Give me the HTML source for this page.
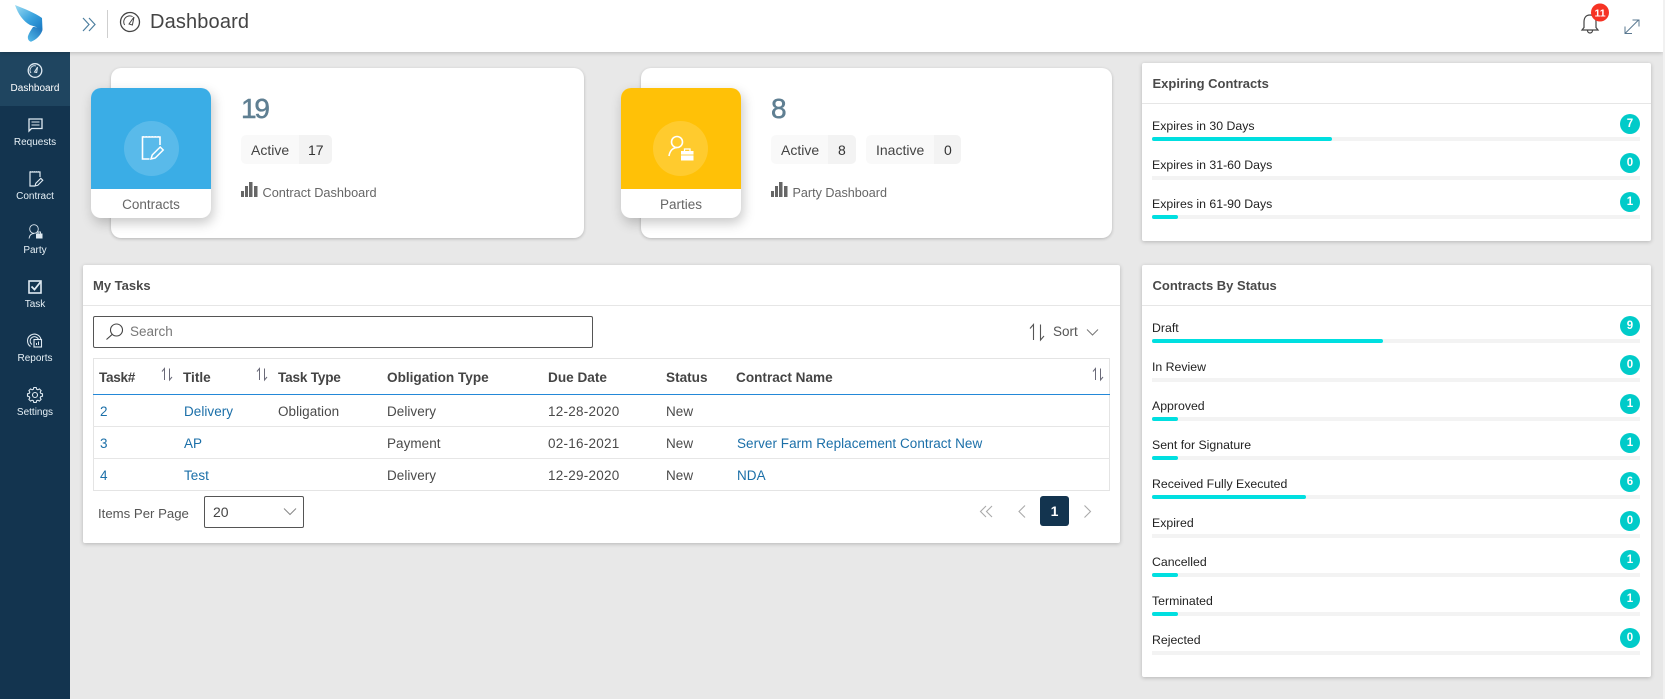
<!DOCTYPE html>
<html lang="en"><head><meta charset="utf-8"><title>Dashboard</title>
<style>
*{box-sizing:border-box}
html,body{margin:0;padding:0;width:1665px;height:699px;overflow:hidden;background:#e8e8e8;font-family:"Liberation Sans",Arial,sans-serif;color:#444}
.a{position:absolute}
.t{position:absolute;white-space:nowrap;line-height:20px;height:20px}
.top{left:0;top:0;width:1663px;height:52px;background:#fff;box-shadow:0 1px 4px rgba(0,0,0,.2)}
.strip{left:1663px;top:0;width:2px;height:699px;background:#f1f1f1}
.side{left:0;top:52px;width:70px;height:647px;background:#13344f}
.act{left:0;top:52px;width:70px;height:54px;background:#1f4560}
.sl{width:70px;left:0;text-align:center;font-size:10px;color:#e6f0f6}
.card{background:#fff;border-radius:10px;box-shadow:0 1px 3px rgba(0,0,0,.22)}
.sq{width:120px;height:130px;top:88px;background:#fff;border-radius:10px;box-shadow:2px 5px 12px rgba(0,0,0,.22);overflow:hidden}
.sq div{height:101px}
.circ{width:55px;height:55px;border-radius:50%;background:rgba(255,255,255,.16);top:121px}
.sqt{font-size:13.5px;color:#666;top:195px;width:120px;text-align:center}
.num{font-size:28px;color:#5f7f92;top:99px;-webkit-text-stroke:.5px #5f7f92;line-height:20px}
.chip{top:135px;height:29px;background:#f9f9f9;border-radius:5px;overflow:hidden}
.chip i{position:absolute;right:0;top:0;height:29px;background:#f3f3f3}
.cl{font-size:14px;top:140px;color:#444}
.cv{font-size:14px;top:140px;color:#333}
.lk{font-size:12.75px;color:#666;top:183px}
.panel{background:#fff;border-radius:2px;box-shadow:0 1px 4px rgba(0,0,0,.22)}
.hl{height:1px;background:#e6e6e6}
.ttl{font-size:13px;font-weight:bold;color:#4a4a4a}
.th{font-size:13.6px;font-weight:bold;color:#444;top:368px}
.td{font-size:13.5px;color:#4a4a4a;letter-spacing:.04px}
.l{color:#1b6fa8}
.r{position:absolute;left:1152px;width:488px;height:30px}
.r span{position:absolute;left:0;top:1px;font-size:12.3px;line-height:20px;color:#222;white-space:nowrap}
.r u{position:absolute;left:0;top:22px;width:488px;height:4px;background:#f3f3f3;display:block;text-decoration:none}
.r s{position:absolute;left:0;top:22px;height:4px;background:#00dfe0;border-radius:2px;display:block;text-decoration:none}
.r b{position:absolute;right:0;top:-1px;width:20px;height:20px;border-radius:50%;background:#00cbc9;color:#fff;font-size:11.5px;line-height:20px;text-align:center}
</style></head><body>

<div class="a side"></div><div class="a act"></div>
<div class="a top"></div>
<div class="a strip"></div>

<div class="t" style="left:150px;top:12px;font-size:20px;color:#444;letter-spacing:.15px">Dashboard</div>

<div class="t sl" style="top:79px;color:#fff">Dashboard</div>
<div class="t sl" style="top:133px">Requests</div>
<div class="t sl" style="top:187px">Contract</div>
<div class="t sl" style="top:241px">Party</div>
<div class="t sl" style="top:295px">Task</div>
<div class="t sl" style="top:349px">Reports</div>
<div class="t sl" style="top:403px">Settings</div>

<!-- Contracts card -->
<div class="a card" style="left:111px;top:68px;width:473px;height:170px"></div>
<div class="a sq" style="left:91px"><div style="background:#3aade6"></div></div>
<div class="a circ" style="left:124px"></div>
<div class="t sqt" style="left:91px">Contracts</div>
<div class="t num" style="left:241px;letter-spacing:-2.2px">19</div>
<div class="a chip" style="left:241px;width:91px"><i style="width:33px"></i></div>
<div class="t cl" style="left:251px">Active</div>
<div class="t cv" style="left:308px">17</div>
<div class="t lk" style="left:262.5px">Contract Dashboard</div>

<!-- Parties card -->
<div class="a card" style="left:641px;top:68px;width:471px;height:170px"></div>
<div class="a sq" style="left:621px"><div style="background:#ffc107"></div></div>
<div class="a circ" style="left:653px"></div>
<div class="t sqt" style="left:621px">Parties</div>
<div class="t num" style="left:771px">8</div>
<div class="a chip" style="left:771px;width:85px"><i style="width:28px"></i></div>
<div class="t cl" style="left:781px">Active</div>
<div class="t cv" style="left:838px">8</div>
<div class="a chip" style="left:866px;width:95px"><i style="width:27px"></i></div>
<div class="t cl" style="left:876px">Inactive</div>
<div class="t cv" style="left:944px">0</div>
<div class="t lk" style="left:792.5px;font-size:12.6px">Party Dashboard</div>

<!-- My tasks -->
<div class="a panel" style="left:83px;top:265px;width:1037px;height:278px"></div>
<div class="a hl" style="left:83px;top:305px;width:1037px"></div>
<div class="t ttl" style="left:93px;top:276px">My Tasks</div>
<div class="a" style="left:93px;top:316px;width:500px;height:32px;border:1px solid #555;border-radius:2px"></div>
<div class="t" style="left:130px;top:322px;font-size:13.5px;color:#777">Search</div>
<div class="t" style="left:1053px;top:322px;font-size:13.5px;color:#555">Sort</div>

<div class="a" style="left:93px;top:358px;width:1017px;height:133px;border:1px solid #e4e4e4;border-top-width:1px"></div>
<div class="a" style="left:93px;top:394px;width:1017px;height:1px;background:#2388d8"></div>
<div class="a hl" style="left:93px;top:426px;width:1017px"></div>
<div class="a hl" style="left:93px;top:458px;width:1017px"></div>

<div class="t th" style="left:99px;letter-spacing:-.3px">Task#</div>
<div class="t th" style="left:183px">Title</div>
<div class="t th" style="left:278px;letter-spacing:-.2px">Task Type</div>
<div class="t th" style="left:387px">Obligation Type</div>
<div class="t th" style="left:548px">Due Date</div>
<div class="t th" style="left:666px">Status</div>
<div class="t th" style="left:736px">Contract Name</div>

<div class="t td l" style="left:100px;top:402px">2</div>
<div class="t td l" style="left:184px;top:402px">Delivery</div>
<div class="t td" style="left:278px;top:402px">Obligation</div>
<div class="t td" style="left:387px;top:402px">Delivery</div>
<div class="t td" style="left:548px;top:402px;letter-spacing:.25px">12-28-2020</div>
<div class="t td" style="left:666px;top:402px">New</div>

<div class="t td l" style="left:100px;top:434px">3</div>
<div class="t td l" style="left:184px;top:434px">AP</div>
<div class="t td" style="left:387px;top:434px">Payment</div>
<div class="t td" style="left:548px;top:434px;letter-spacing:.25px">02-16-2021</div>
<div class="t td" style="left:666px;top:434px">New</div>
<div class="t td l" style="left:737px;top:434px">Server Farm Replacement Contract New</div>

<div class="t td l" style="left:100px;top:466px">4</div>
<div class="t td l" style="left:184px;top:466px">Test</div>
<div class="t td" style="left:387px;top:466px">Delivery</div>
<div class="t td" style="left:548px;top:466px;letter-spacing:.25px">12-29-2020</div>
<div class="t td" style="left:666px;top:466px">New</div>
<div class="t td l" style="left:737px;top:466px">NDA</div>

<div class="t" style="left:98px;top:504px;font-size:13.2px;color:#555">Items Per Page</div>
<div class="a" style="left:204px;top:496px;width:100px;height:32px;border:1px solid #555;border-radius:2px"></div>
<div class="t" style="left:213px;top:502px;font-size:14px;color:#444">20</div>
<div class="a" style="left:1040px;top:496px;width:29px;height:30px;background:#13344f;border-radius:3px"></div>
<div class="t" style="left:1040px;width:29px;text-align:center;top:501px;font-size:14px;font-weight:bold;color:#fff">1</div>

<!-- Expiring -->
<div class="a panel" style="left:1142px;top:63px;width:509px;height:178px"></div>
<div class="a hl" style="left:1142px;top:103px;width:509px"></div>
<div class="t ttl" style="left:1152.500px;top:74px">Expiring Contracts</div>
<div class="r" style="top:115px"><span>Expires in 30 Days</span><u></u><s style="width:180px"></s><b>7</b></div>
<div class="r" style="top:154px"><span>Expires in 31-60 Days</span><u></u><b>0</b></div>
<div class="r" style="top:193px"><span>Expires in 61-90 Days</span><u></u><s style="width:26px"></s><b>1</b></div>

<!-- By status -->
<div class="a panel" style="left:1142px;top:265px;width:509px;height:412px"></div>
<div class="a hl" style="left:1142px;top:305px;width:509px"></div>
<div class="t ttl" style="left:1152.500px;top:276px">Contracts By Status</div>
<div class="r" style="top:317px"><span>Draft</span><u></u><s style="width:231px"></s><b>9</b></div>
<div class="r" style="top:356px"><span>In Review</span><u></u><b>0</b></div>
<div class="r" style="top:395px"><span>Approved</span><u></u><s style="width:26px"></s><b>1</b></div>
<div class="r" style="top:434px"><span>Sent for Signature</span><u></u><s style="width:26px"></s><b>1</b></div>
<div class="r" style="top:473px"><span>Received Fully Executed</span><u></u><s style="width:154px"></s><b>6</b></div>
<div class="r" style="top:512px"><span>Expired</span><u></u><b>0</b></div>
<div class="r" style="top:551px"><span>Cancelled</span><u></u><s style="width:26px"></s><b>1</b></div>
<div class="r" style="top:590px"><span>Terminated</span><u></u><s style="width:26px"></s><b>1</b></div>
<div class="r" style="top:629px"><span>Rejected</span><u></u><b>0</b></div>

<!-- Icon overlay -->
<svg class="a" style="left:0;top:0" width="1665" height="699" viewBox="0 0 1665 699" fill="none">
<defs>
<linearGradient id="g1" x1="0" y1="0" x2="1" y2="1"><stop offset="0" stop-color="#9ddcf2"/><stop offset=".55" stop-color="#3aa3de"/><stop offset="1" stop-color="#1877c2"/></linearGradient>
<linearGradient id="g2" x1="1" y1="0" x2="0" y2="1"><stop offset="0" stop-color="#1a6fba"/><stop offset="1" stop-color="#57bdea"/></linearGradient>
</defs>
<!-- logo -->
<path d="M15 5 C25 9 35 13 42 18 L42.5 30 C37 27 33 26 30 25 C23 21 18 14 15 5Z" fill="url(#g1)"/>
<path d="M42.5 30 C41 35 36 40 31 41.7 C28 41 27.5 38 28 36 C29 33 31 30 33 27 C37 27 40 28 42.5 30Z" fill="url(#g2)"/>

<!-- top bar -->
<path d="M83 18l6 6.5-6 6.5M89 18l6 6.5-6 6.5" stroke="#4d7f9f" stroke-width="1.2"/>
<path d="M107.5 10v28" stroke="#cfcfcf" stroke-width="1"/>
<g stroke="#444">
<circle cx="130" cy="22" r="9.5" stroke-width="1.3"/>
<path d="M124.6 25a6 6 0 0 1 2-8.2 6 6 0 0 1 6-.2" stroke-width="1"/>
<path d="M129 24l5-7-1.6 8z" stroke-width="1"/>
</g>
<path d="M1590 15c-4.6 0-6 3.6-6 7v5.5l-2 2.500h16l-2-2.500V22c0-3.400-1.400-7-6-7z" stroke="#444" stroke-width="1.200"/>
<path d="M1587.500 30.500a2.500 2.500 0 0 0 5 0" stroke="#444" stroke-width="1.200"/>
<circle cx="1600" cy="12.500" r="9" fill="#f63324"/>
<text x="1600" y="16.500" font-family="Liberation Sans" font-size="10.500" font-weight="bold" fill="#fff" text-anchor="middle">11</text>
<path d="M1625.500 33l13-13M1632.500 20h6.500v6.500M1625 26.500v7h7" stroke="#5a7890" stroke-width="1"/>

<!-- sidebar icons -->
<g stroke="#dfeaf2" fill="none">
<circle cx="35" cy="70.500" r="6.800" stroke-width="1.300"/>
<path d="M31 73a4.500 4.500 0 0 1 5-7" stroke-width=".9"/>
<path d="M34.500 72l3-5-.8 5.500z" stroke-width="1"/>
<path d="M29 119h13v9.500h-10.500l-2.500 2.500z" stroke-width="1.300"/>
<path d="M31.500 122h8M31.500 125h8" stroke-width="1.100"/>
<path d="M40 177v-5H30v14h4.500" stroke-width="1.200"/>
<path d="M30 171.800h10" stroke-width="1" stroke-dasharray="1 1"/>
<path d="M35 186l.8-2.700 5-5 2 2-5 5z" stroke-width="1.100"/>
<circle cx="34" cy="229" r="4.300" stroke-width=".9"/>
<path d="M29 238.500c.6-3.500 2.500-5 5-5" stroke-width=".9"/>
<rect x="36" y="233.500" width="6.500" height="5" fill="#dfeaf2" stroke="none"/>
<path d="M38 233.500v-1.500h2.500v1.500" stroke-width=".9"/>
<rect x="29" y="281" width="12" height="12" stroke-width="1.600"/>
<path d="M31.500 286.500l3 3 6-7.500" stroke-width="1.800"/>
<path d="M30.500 346.500a6.800 6.800 0 1 1 10.500-7" stroke-width="1.100"/>
<path d="M32 344.500a4.300 4.300 0 1 1 6.500-5" stroke-width="1"/>
<rect x="34" y="339.500" width="7.500" height="7.500" stroke-width="1.100"/>
<path d="M36.500 345v-2M38.500 345v-3.500" stroke-width="1"/>
<circle cx="35" cy="395" r="2.500" stroke-width="1.100"/>
<path d="M33.800 388.500h2.400l.4 1.700 1.300.6 1.500-.9 1.700 1.700-.9 1.500.6 1.300 1.700.4v2.400l-1.700.4-.6 1.300.9 1.500-1.700 1.700-1.500-.9-1.300.6-.4 1.700h-2.400l-.4-1.700-1.300-.6-1.500.9-1.700-1.700.9-1.500-.6-1.300-1.700-.4v-2.400l1.700-.4.600-1.300-.9-1.500 1.700-1.700 1.500.9 1.300-.6z" stroke-width="1.100" transform="translate(0 -1)"/>
</g>

<!-- card icons -->
<g stroke="#fff" stroke-width="1.600">
<path d="M160 145v-8h-17.500v22h7"/>
<path d="M142.500 136.800h17.500" stroke-dasharray="1.500 1.500" stroke-width="1.400"/>
<path d="M151 159l1.200-4 8-8 3 3-8 8z" stroke-width="1.500"/>
<circle cx="677" cy="142" r="5.500"/>
<path d="M669 156c.8-5 3.500-8 8-8.500"/>
</g>
<g>
<rect x="681" y="151" width="12.500" height="9.500" fill="#fff"/>
<path d="M684.500 151v-2h5.500v2" stroke="#fff" stroke-width="1.300"/>
<path d="M681 155h12.500" stroke="#ffd24a" stroke-width="1"/>
</g>

<!-- bar chart icons -->
<path d="M241 191h3v6h-3zM245 186h3v11h-3zM249 182h3.500v15H249zM254 186h3.500v11H254z" fill="#666"/>
<path d="M771 191h3v6h-3zM775 186h3v11h-3zM779 182h3.500v15H779zM784 186h3.500v11H784z" fill="#666"/>

<!-- search -->
<circle cx="116.500" cy="330" r="6" stroke="#444" stroke-width="1.100"/>
<path d="M112.300 334.300l-5.800 5.200" stroke="#444" stroke-width="1.100"/>

<!-- sort icons -->
<g stroke="#6a6a78" stroke-width="1">
<path d="M164.500 380v-11.500l-2.500 3M169.500 368.500V380l2.500-3"/>
<path d="M259.500 380v-11.500l-2.500 3M264.500 368.500V380l2.500-3"/>
<path d="M1095.500 380v-11.500l-2.500 3M1100.500 368.500V380l2.500-3"/>
</g>
<path d="M1033.500 340v-15.500l-3.500 4M1040.500 324.500V340l3.500-4" stroke="#555" stroke-width="1.100"/>
<path d="M1087 329.500l5.500 5.500 5.500-5.500" stroke="#777" stroke-width="1"/>
<path d="M284 508.500l6 6 6-6" stroke="#888" stroke-width="1"/>

<!-- pagination -->
<path d="M986 506l-5.500 5.500 5.500 5.500M992 506l-5.500 5.500 5.500 5.500" stroke="#aaa" stroke-width="1.100"/>
<path d="M1025 505.500l-6 6 6 6" stroke="#aaa" stroke-width="1.100"/>
<path d="M1084.500 505.500l6 6-6 6" stroke="#aaa" stroke-width="1.100"/>
</svg>
</body></html>
